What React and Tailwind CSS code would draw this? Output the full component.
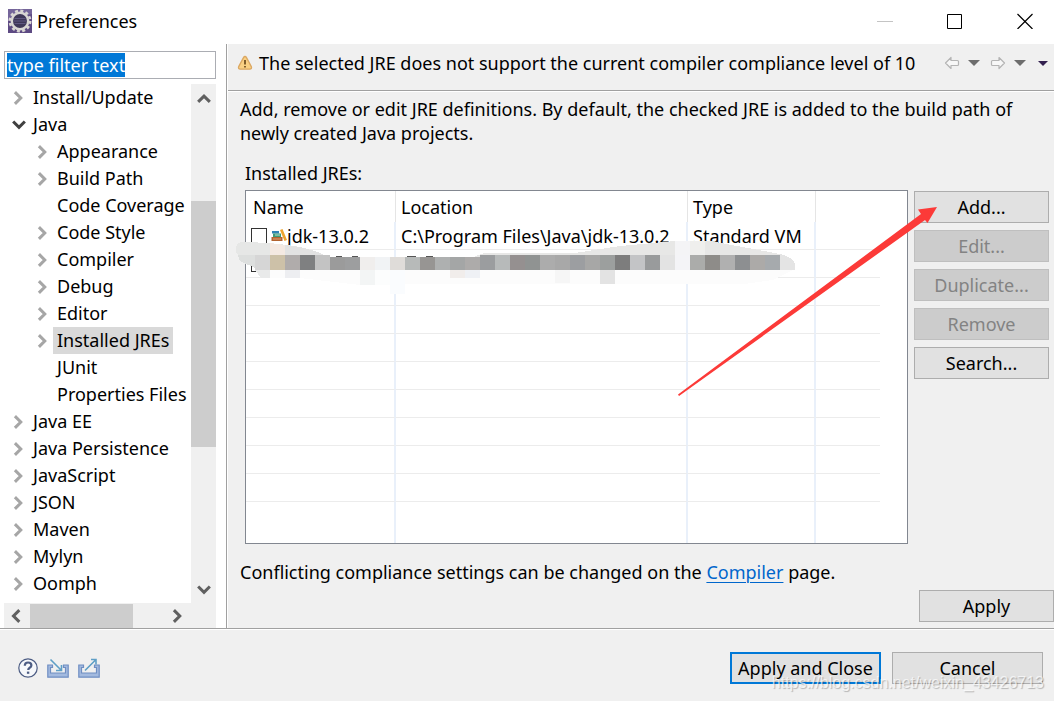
import { useEffect, useRef } from 'react';

const treeItems = [
  { label: 'Install/Update', level: 0, state: 'closed' },
  { label: 'Java', level: 0, state: 'open' },
  { label: 'Appearance', level: 1, state: 'closed' },
  { label: 'Build Path', level: 1, state: 'closed' },
  { label: 'Code Coverage', level: 1, state: 'leaf' },
  { label: 'Code Style', level: 1, state: 'closed' },
  { label: 'Compiler', level: 1, state: 'closed' },
  { label: 'Debug', level: 1, state: 'closed' },
  { label: 'Editor', level: 1, state: 'closed' },
  { label: 'Installed JREs', level: 1, state: 'closed', selected: true },
  { label: 'JUnit', level: 1, state: 'leaf' },
  { label: 'Properties Files', level: 1, state: 'leaf' },
  { label: 'Java EE', level: 0, state: 'closed' },
  { label: 'Java Persistence', level: 0, state: 'closed' },
  { label: 'JavaScript', level: 0, state: 'closed' },
  { label: 'JSON', level: 0, state: 'closed' },
  { label: 'Maven', level: 0, state: 'closed' },
  { label: 'Mylyn', level: 0, state: 'closed' },
  { label: 'Oomph', level: 0, state: 'closed' },
];

const jreButtons = [
  { label: 'Add...' },
  { label: 'Edit...', disabled: true },
  { label: 'Duplicate...', disabled: true },
  { label: 'Remove', disabled: true },
  { label: 'Search...' },
];

// Blocks of the censored row: [x, y, width, height, colour]
const mosaic = [
  [20, 18, 15, 15, '#d6d6d6'],
  [35, 18, 15, 15, '#cdc1a8'],
  [50, 18, 15, 15, '#b0acab'],
  [65, 18, 15, 15, '#7f8081'],
  [80, 18, 15, 15, '#c3c3c3'],
  [95, 20, 15, 13, '#9b9b9b'],
  [110, 20, 15, 13, '#9d9e9f'],
  [125, 20, 15, 13, '#f0eeed'],
  [140, 20, 15, 13, '#f1f3f5'],
  [155, 20, 15, 13, '#dfdcd9'],
  [170, 20, 15, 13, '#b7bab9'],
  [185, 20, 15, 13, '#979593'],
  [200, 20, 15, 13, '#aeb0b0'],
  [215, 20, 15, 13, '#a4a6a6'],
  [230, 20, 15, 13, '#adabaa'],
  [245, 18, 15, 15, '#9b9d9f'],
  [260, 18, 15, 15, '#b7baba'],
  [275, 18, 15, 15, '#959090'],
  [290, 18, 15, 15, '#909392'],
  [305, 18, 15, 15, '#acacac'],
  [320, 18, 15, 15, '#a8a8a8'],
  [335, 18, 15, 15, '#9c9ea1'],
  [350, 18, 15, 15, '#a7a7a6'],
  [365, 18, 15, 15, '#9c9f9e'],
  [380, 18, 15, 15, '#7d7d7d'],
  [395, 18, 15, 15, '#c3c4c6'],
  [410, 18, 15, 15, '#999b9c'],
  [425, 18, 15, 15, '#e3e3e3'],
  [440, 18, 15, 15, '#f4f4f7'],
  [455, 18, 15, 15, '#abacaa'],
  [470, 18, 15, 15, '#8e8c89'],
  [485, 18, 15, 15, '#b0b0b0'],
  [500, 18, 15, 15, '#8d8f91'],
  [515, 18, 15, 15, '#acaaa8'],
  [530, 18, 15, 15, '#a6aaad'],
  [50, 33, 15, 8, '#edeef1'],
  [125, 33, 15, 15, '#f3f5f5'],
  [140, 33, 15, 15, '#fcfdfd'],
  [155, 33, 15, 24, '#fafcfe'],
  [215, 33, 15, 8, '#f1edeb'],
  [230, 33, 15, 8, '#eff1f5'],
  [320, 33, 15, 13, '#f6f6f6'],
  [365, 33, 15, 14, '#e3e3e3'],
];

function Chevron({ direction, className }) {
  const paths = {
    right: 'M2.500 1l5 5-5 5',
    left: 'M8 1L3 6l5 5',
    up: 'M1 8.500l5-5 5 5',
    down: 'M1 3l5 5 5-5',
  };
  return (
    <svg viewBox="0 0 12 12" className={className} fill="none" stroke="currentColor" strokeWidth="2.6">
      <path d={paths[direction]} />
    </svg>
  );
}

function EclipseIcon() {
  return (
    <svg viewBox="0 0 24 24" className="size-6 shrink-0">
      <rect width="24" height="24" fill="#5d4a83" />
      <path d="M0 0h24v5L0 12z" fill="#75659a" />
      <circle cx="12" cy="12" r="10.200" fill="none" stroke="#d9d6d3" strokeWidth="2.600" strokeDasharray="3 2.340" />
      <circle cx="12" cy="12" r="8.200" fill="#3f3758" stroke="#d9d6d3" strokeWidth="2.400" />
      <path d="M6.500 9.500h11M5.500 12h13M6.500 14.500h11" stroke="#5f5780" strokeWidth="1.200" />
    </svg>
  );
}

function WarningIcon() {
  return (
    <svg viewBox="0 0 16 16" className="size-4 shrink-0">
      <path d="M8 1.500c.7 0 1.100.4 1.500 1.100l4.800 9c.6 1.400 0 2.600-1.500 2.600H3.200c-1.500 0-2.100-1.200-1.500-2.600l4.800-9C6.900 1.900 7.300 1.500 8 1.500z" fill="#f9d083" stroke="#dba863" strokeWidth="1.300" />
      <path d="M8 5v4.500M8 11v1.600" stroke="#6b4a1e" strokeWidth="1.700" />
    </svg>
  );
}

function NavArrow({ flip }) {
  return (
    <svg viewBox="0 0 16 14" className={flip ? 'w-4 h-3.5 rotate-180' : 'w-4 h-3.5'} fill="#f7f7f7" stroke="#b4b4b4" strokeWidth="1.2" strokeLinejoin="round">
      <path d="M1.500 7L7 1.500V4.500h6.500q1 0 1 1v3q0 1-1 1H7v3z" />
    </svg>
  );
}

function Caret({ className }) {
  return (
    <svg viewBox="0 0 12 6" className={className} fill="currentColor">
      <path d="M0 0h12L6 6z" />
    </svg>
  );
}

function BooksIcon() {
  return (
    <svg viewBox="0 0 16 16" className="size-4 shrink-0">
      <rect x="1" y="3" width="7" height="2.500" fill="#2f83b5" />
      <rect x="2" y="5.500" width="8" height="3.500" fill="#3f9a78" />
      <path d="M4 7h5" stroke="#b9dfce" strokeWidth="1" />
      <rect x="0.500" y="9" width="11" height="4" fill="#b4632f" />
      <path d="M2 11h8" stroke="#e0a176" strokeWidth="1" />
      <path d="M9 2l2.500-1L16 12l-2.500 1z" fill="#eda52f" />
    </svg>
  );
}

function TrayIcon({ out }) {
  return (
    <svg viewBox="0 0 22 20" className="w-[22px] h-5" fill="none">
      <path d="M5.500 7H.8v12.200h20.400V7h-4.700v2.500h2v5.500h-15V9.500h2z" fill="#a3badf" stroke="#6f8ec2" strokeWidth="1.200" />
      {out ? (
        <path d="M7 12.500L17.500 2M13 1.500h5v5" stroke="#5f9fc6" strokeWidth="1.600" />
      ) : (
        <path d="M3.500 1.500l10.500 10.500M14.500 7v5.500H9" stroke="#5f9fc6" strokeWidth="1.600" />
      )}
    </svg>
  );
}

function CheckBox({ label, checked }) {
  return (
    <input
      type="checkbox"
      aria-label={label}
      defaultChecked={checked}
      className="size-4 shrink-0 appearance-none border border-[#333] bg-white"
    />
  );
}

function TreePanel() {
  const filterRef = useRef(null);

  // The filter starts focused with its text selected
  useEffect(() => {
    filterRef.current.focus();
    filterRef.current.select();
  }, []);

  return (
    <div className="flex w-[227px] shrink-0 flex-col border-r border-[#a0a0a0] bg-white pl-1 pt-[7px]">
      <input
        ref={filterRef}
        type="text"
        aria-label="Filter"
        defaultValue="type filter text"
        className="mr-2.5 h-7 border border-[#abadb3] px-0.5 leading-6 outline-none selection:bg-[#0078d7] selection:text-white"
      />
      <div className="mr-2.5 mt-[5px] flex flex-1">
        <ul className="min-w-0 flex-1 overflow-hidden pb-1.5">
          {treeItems.map((item) => (
            <li
              key={item.label}
              className={`flex h-[27px] items-center gap-[5px] ${item.level ? 'pl-[34px]' : 'pl-2.5'}`}
            >
              <span className="w-2.5 shrink-0">
                {item.state === 'closed' && <Chevron direction="right" className="size-3.5 -ml-0.5 text-[#a6a6a6]" />}
                {item.state === 'open' && <Chevron direction="down" className="-ml-0.5 size-3.5 text-[#404040]" />}
              </span>
              <span className={`px-1 leading-[27px] ${item.selected ? 'bg-[#d9d9d9]' : ''}`}>{item.label}</span>
            </li>
          ))}
        </ul>
        {/* Vertical scroll bar */}
        <div className="flex w-[25px] flex-col items-center bg-[#f0f0f0] pb-1.5 pt-2 text-[#606060]">
          <Chevron direction="up" className="size-3.5" />
          <div className="mt-[95px] h-[246px] w-full bg-[#cdcdcd]"></div>
          <Chevron direction="down" className="mt-auto size-3.5" />
        </div>
      </div>
      {/* Horizontal scroll bar */}
      <div className="mr-2.5 flex h-[25px] items-center bg-[#f0f0f0] pl-1.5 pr-[31px] text-[#606060]">
        <Chevron direction="left" className="size-3.5" />
        <div className="ml-1.5 h-6 w-[103px] bg-[#cdcdcd]"></div>
        <Chevron direction="right" className="ml-auto size-3.5" />
      </div>
    </div>
  );
}

function JreTable() {
  const line = 'border-r-2 border-r-[#e9f0fa] border-b border-b-[#ececec]';
  const head = 'h-[31px] border-r border-[#e5e5e5] p-0 text-left font-normal';
  return (
    <div className="relative min-w-0 flex-1 border border-[#828790] bg-white">
      <table className="w-full table-fixed border-separate border-spacing-0">
        <colgroup>
          <col className="w-[150px]" />
          <col className="w-[292px]" />
          <col className="w-[128px]" />
          <col className="w-[64px]" />
          <col />
        </colgroup>
        <thead>
          <tr>
            <th className={`${head} pl-[7px]`}>Name</th>
            <th className={`${head} pl-[5px]`}>Location</th>
            <th className={`${head} pl-[5px]`}>Type</th>
            <th></th>
            <th></th>
          </tr>
        </thead>
        <tbody>
          <tr className="h-7">
            <td className={`${line} p-0 pl-[5px]`}>
              <div className="flex items-center">
                <CheckBox label="jdk-13.0.2" />
                <span className="ml-1 flex items-center"><BooksIcon />jdk-13.0.2</span>
              </div>
            </td>
            <td className={`${line} p-0 pl-[5px]`}>C:\Program Files\Java\jdk-13.0.2</td>
            <td className={`${line} p-0 pl-[5px]`}>Standard VM</td>
            <td className="border-b border-b-[#ececec]"></td>
            <td></td>
          </tr>
          <tr className="h-7">
            <td className={`${line} p-0 pl-[5px]`}>
              <div className="flex items-center"><CheckBox label="Default JRE" checked /></div>
            </td>
            <td className={line}></td>
            <td className={line}></td>
            <td className="border-b border-b-[#ececec]"></td>
            <td></td>
          </tr>
          {Array.from({ length: 8 }, (_, i) => (
            <tr key={i} className="h-7">
              <td className={line}></td>
              <td className={line}></td>
              <td className={line}></td>
              <td className="border-b border-b-[#ececec]"></td>
              <td></td>
            </tr>
          ))}
          <tr className="h-[41px]">
            <td className="border-r-2 border-[#e9f0fa]"></td>
            <td className="border-r-2 border-[#e9f0fa]"></td>
            <td className="border-r-2 border-[#e9f0fa]"></td>
            <td></td>
            <td></td>
          </tr>
        </tbody>
      </table>

      {/* Censored second row */}
      <svg viewBox="0 0 565 60" className="absolute -left-[11px] top-[46px] h-[60px] w-[565px]" shapeRendering="crispEdges">
        <path d="M25 33H558L538 43 510 47H150L125 48 65 41H30z" fill="#fcfcfc" />
        <path d="M20 33h15v8h-9z" fill="#e9eaea" />
        <path d="M1 11Q2 3 15 5L45 7 65 10 92 20H5Q0 16 1 11z" fill="#e6e7e6" />
        <path d="M35 6L50 8V18H35z" fill="#f4e9e2" />
        <path d="M50 8L65 10 80 14 92 19H50z" fill="#e2e2e2" />
        <path d="M240 19L250 16H340L385 9 440 4H475L540 16 552 20V20H240z" fill="#e7e7e6" />
        <path d="M440 4h15v14h-15z" fill="#f4f4f6" />
        <path d="M455 4h15v14h-15z" fill="#efefed" />
        <path d="M3 18H20V31L5 24z" fill="#dddfde" />
        <path d="M545 17Q560 21 560 29V33H545z" fill="#e4e4e4" />
        <path d="M101 19.500h6M117 19.500h6M172 19.500h9M191 19.500h7" stroke="#555" strokeWidth="1" />
        {mosaic.map(([x, y, w, h, fill]) => (
          <rect key={`${x}-${y}`} x={x} y={y} width={w} height={h} fill={fill} />
        ))}
      </svg>
    </div>
  );
}

export default function App() {
  const button = 'h-8 border border-[#adadad] bg-[#e1e1e1] text-center leading-6';
  return (
    <div className="relative flex min-h-screen flex-col bg-[#f0f0f0] font-['Noto_Sans','Open_Sans',sans-serif] text-[18px] leading-6 text-black">
      {/* Title bar */}
      <header className="flex h-11 items-center bg-white pb-0.5 pl-2 pr-[21px]">
        <EclipseIcon />
        <h1 className="ml-[5px]">Preferences</h1>
        <div className="ml-auto flex items-center gap-[54px]">
          <button type="button" aria-label="Minimize" disabled>
            <svg viewBox="0 0 16 16" className="size-4" stroke="#c4c4c4"><path d="M0 8.500h16" /></svg>
          </button>
          <button type="button" aria-label="Maximize">
            <svg viewBox="0 0 16 16" className="size-4" fill="none" stroke="#000"><path d="M.5 1.500h14v14h-14z" /></svg>
          </button>
          <button type="button" aria-label="Close">
            <svg viewBox="0 0 16 16" className="size-4" stroke="#000" strokeWidth="1.200"><path d="M.5 1l15 15M15.500 1l-15 15" /></svg>
          </button>
        </div>
      </header>

      <div className="flex flex-1">
        <TreePanel />
        <main className="flex min-w-0 flex-1 flex-col border-l border-white">
          {/* Message and history arrows */}
          <div className="flex h-[47px] items-center border-b border-[#a0a0a0] pb-2 pl-[9px] pr-1.5">
            <WarningIcon />
            <span className="ml-1.5 whitespace-nowrap">The selected JRE does not support the current compiler compliance level of 10</span>
            <div className="ml-auto flex items-center">
              <button type="button" aria-label="Back"><NavArrow /></button>
              <button type="button" aria-label="Back history" className="ml-2"><Caret className="h-1.5 w-3 text-[#6d6d6d]" /></button>
              <button type="button" aria-label="Forward" className="ml-2.5"><NavArrow flip /></button>
              <button type="button" aria-label="Forward history" className="ml-2"><Caret className="h-1.5 w-3 text-[#6d6d6d]" /></button>
              <button type="button" aria-label="View menu" className="ml-3"><Caret className="h-[5px] w-2.5 text-[#33204f]" /></button>
            </div>
          </div>

          <div className="flex flex-1 flex-col border-t border-white pb-1.5 pl-3 pt-[5px]">
            <p>Add, remove or edit JRE definitions. By default, the checked JRE is added to the build path of newly created Java projects.</p>
            <h2 className="ml-[5px] mt-4">Installed JREs:</h2>
            <div className="relative ml-[5px] mr-[5px] mt-[5px] flex gap-1.5">
              <JreTable />
              <div className="mt-px flex w-[135px] shrink-0 flex-col gap-[7px]">
                {jreButtons.map((b) => (
                  <button
                    key={b.label}
                    type="button"
                    disabled={b.disabled}
                    className={`${button} disabled:border-[#bfbfbf] disabled:bg-[#cccccc] disabled:text-[#838383]`}
                  >
                    {b.label}
                  </button>
                ))}
              </div>
              {/* Red pointer to the Add button */}
              <svg viewBox="0 0 260 190" className="pointer-events-none absolute right-[111px] top-4 h-[190px] w-[260px]">
                <path d="M0 188.500L243 8 240 3.500 259 1 249.500 17 247 14 1 190z" fill="#fc3a38" />
              </svg>
            </div>
            <p className="mt-4">
              Conflicting compliance settings can be changed on the{' '}
              <a href="#compiler" className="text-[#0066cc] underline decoration-1 underline-offset-3">Compiler</a> page.
            </p>
            <button type="button" className={`${button} mt-auto w-[135px] self-end`}>Apply</button>
          </div>
        </main>
      </div>

      {/* Bottom bar */}
      <footer className="flex h-[73px] items-center border-t border-[#a0a0a0] pl-[18px] pr-[11px] pt-1.5 shadow-[inset_0_1px_0_#fff]">
        <div className="flex items-center gap-[9px]">
          <button type="button" aria-label="Help">
            <svg viewBox="0 0 20 20" className="size-5" fill="none" stroke="#4d5d84">
              <circle cx="10" cy="10" r="9.200" fill="#f6f8fb" strokeWidth="1.200" />
              <path d="M6.800 7.800q0-3.300 3.300-3.300t3.300 2.800q0 1.500-1.700 2.500-1.500.9-1.500 2.300" strokeWidth="2.200" />
              <path d="M10.100 13.600v2.200" strokeWidth="2.400" />
            </svg>
          </button>
          <button type="button" aria-label="Import"><TrayIcon /></button>
          <button type="button" aria-label="Export"><TrayIcon out /></button>
        </div>
        <div className="ml-auto flex gap-[11px]">
          <button type="button" className="h-8 w-[151px] whitespace-nowrap border-2 border-[#0078d7] bg-[#e1e1e1]">Apply and Close</button>
          <button type="button" className={`${button} w-[151px]`}>Cancel</button>
        </div>
      </footer>
      <span className="pointer-events-none absolute bottom-2 right-2.5 font-['Liberation_Sans',Arial,sans-serif] text-[16px] leading-5 text-white/70 [text-shadow:1px_1px_1px_rgba(0,0,0,0.25)]">
        https://blog.csdn.net/weixin_43426713
      </span>
    </div>
  );
}
